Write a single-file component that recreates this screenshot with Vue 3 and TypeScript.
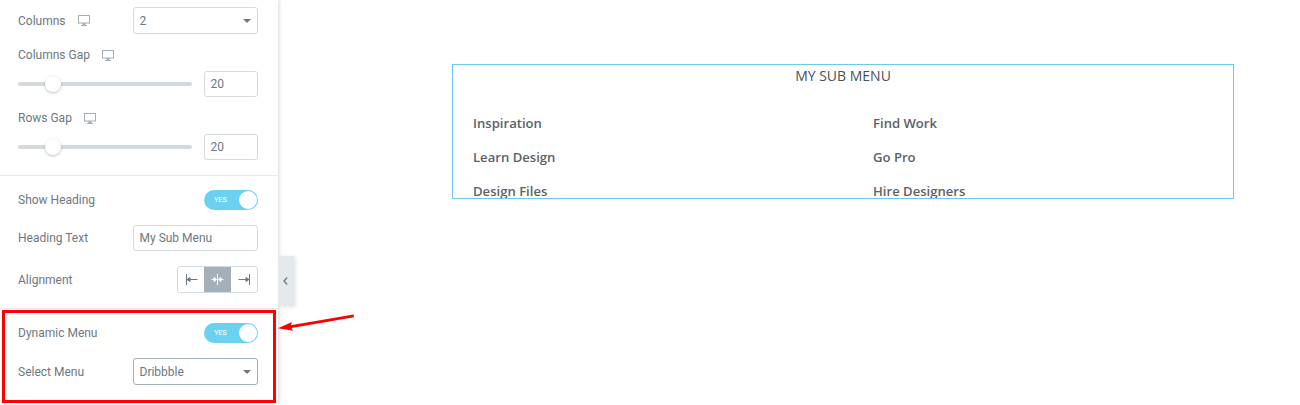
<script setup lang="ts">
const menuItems: string[] = ['Inspiration', 'Find Work', 'Learn Design', 'Go Pro', 'Design Files', 'Hire Designers']
</script>

<template>
  <div class="page">
    <aside class="panel">
      <div class="row first">
        <span class="label">Columns</span>
        <svg class="device" viewBox="0 0 12 11"><path d="M0 0h12v8.5H7.5V10H9v1H3v-1h1.500V8.500H0z M1 1v6.500h10V1z" fill-rule="evenodd" /></svg>
        <div class="select"><span>2</span><i class="caret"></i></div>
      </div>
      <div class="stack gap1">
        <div class="caption"><span class="label">Columns Gap</span>
          <svg class="device" viewBox="0 0 12 11"><path d="M0 0h12v8.5H7.5V10H9v1H3v-1h1.500V8.500H0z M1 1v6.500h10V1z" fill-rule="evenodd" /></svg>
        </div>
        <div class="slider"><div class="track"><i class="thumb"></i></div><div class="num">20</div></div>
      </div>
      <div class="stack gap2">
        <div class="caption"><span class="label">Rows Gap</span>
          <svg class="device" viewBox="0 0 12 11"><path d="M0 0h12v8.5H7.5V10H9v1H3v-1h1.500V8.500H0z M1 1v6.500h10V1z" fill-rule="evenodd" /></svg>
        </div>
        <div class="slider"><div class="track"><i class="thumb"></i></div><div class="num">20</div></div>
      </div>
      <hr class="rule r1" />
      <div class="row toggle-row">
        <span class="label">Show Heading</span>
        <div class="toggle"><span>YES</span><i></i></div>
      </div>
      <div class="row text-row">
        <span class="label">Heading Text</span>
        <div class="text">My Sub Menu</div>
      </div>
      <div class="row align-row">
        <span class="label">Alignment</span>
        <div class="choices">
          <div class="choice">
            <svg viewBox="0 0 13 11"><path d="M1.500 0v11M2 5.500h10.500M2 5.500l3-2v4z" /></svg>
          </div>
          <div class="choice on">
            <svg viewBox="0 0 13 11"><path d="M6.500 0v11M0.500 5.500h4M8.500 5.500h4M5.500 5.500l-2.500-2v4zM7.500 5.500l2.500-2v4z" /></svg>
          </div>
          <div class="choice">
            <svg viewBox="0 0 13 11"><path d="M11.500 0v11M0.500 5.500H11M11 5.500l-3-2v4z" /></svg>
          </div>
        </div>
      </div>
      <hr class="rule r2" />
      <section class="highlight">
        <div class="row dyn">
          <span class="label">Dynamic Menu</span>
          <div class="toggle"><span>YES</span><i></i></div>
        </div>
        <div class="row sel">
          <span class="label">Select Menu</span>
          <div class="select focus"><span>Dribbble</span><i class="caret"></i></div>
        </div>
      </section>
      <div class="collapse">
        <svg viewBox="0 0 5 8"><path d="M4.200 0.500L1 4L4.200 7.500" /></svg>
      </div>
    </aside>

    <main class="canvas">
      <div class="menu">
        <h3>MY SUB MENU</h3>
        <ul>
          <li v-for="item in menuItems" :key="item">{{ item }}</li>
        </ul>
      </div>
    </main>

    <svg class="arrow" viewBox="0 0 80 20" width="80" height="20">
      <path d="M1 14.300L15 8L13.800 11.200L76.500 0.600L77 3.200L14.500 14L16 16.800z" fill="#f00" />
    </svg>
  </div>
</template>

<style scoped>
.page {
  position: relative;
  display: flex;
  width: 1300px;
  height: 405px;
  overflow: hidden;
  background: #fff;
  font-family: Roboto, "Liberation Sans", sans-serif;
}
.panel {
  position: relative;
  flex: none;
  box-sizing: border-box;
  width: 278px;
  height: 405px;
  box-shadow: 1px 0 4px rgba(0, 0, 0, 0.16);
  background: #fff;
  z-index: 1;
}
.row {
  display: flex;
  align-items: center;
  padding: 0 20px 0 18px;
}
.first {
  height: 27px;
  margin-top: 7px;
}
.label {
  font-size: 12px;
  color: #6d7882;
  white-space: nowrap;
}
.device {
  width: 12px;
  height: 11px;
  margin-left: 12px;
  fill: #a4afb7;
}
.select {
  box-sizing: border-box;
  display: flex;
  align-items: center;
  justify-content: space-between;
  width: 125px;
  height: 27px;
  margin-left: auto;
  padding: 0 6px 0 5.500px;
  border: 1px solid #d5dadf;
  border-radius: 3px;
  font-size: 12px;
  color: #6d7882;
}
.select.focus {
  border-color: #a4afb7;
}
.caret {
  width: 0;
  height: 0;
  border-left: 4px solid transparent;
  border-right: 4px solid transparent;
  border-top: 4.500px solid #6d7882;
}
.stack {
  padding: 0 20px 0 18px;
}
.gap1 { margin-top: 14px; }
.gap2 { margin-top: 14px; }
.caption {
  display: flex;
  align-items: center;
  height: 14px;
}
.slider {
  display: flex;
  align-items: center;
  margin-top: 9px;
  height: 26px;
}
.track {
  position: relative;
  width: 174px;
  height: 4px;
  border-radius: 2px;
  background: #d5dadf;
}
.thumb {
  position: absolute;
  left: 27px;
  top: -6.500px;
  width: 16px;
  height: 16px;
  border-radius: 50%;
  background: #fff;
  box-shadow: 0 1px 3px rgba(0, 0, 0, 0.25);
}
.num {
  box-sizing: border-box;
  width: 54px;
  height: 26px;
  margin-left: auto;
  padding-left: 5.500px;
  border: 1px solid #d5dadf;
  border-radius: 3px;
  font-size: 12px;
  line-height: 24px;
  color: #6d7882;
}
.rule {
  margin: 0;
  border: 0;
  height: 1px;
  background: #e6e9ec;
}
.r1 { margin-top: 15px; }
.toggle-row {
  height: 20px;
  margin-top: 14px;
}
.toggle {
  position: relative;
  box-sizing: border-box;
  width: 54px;
  height: 20px;
  margin-left: auto;
  border-radius: 10px;
  background: #6ad2f0;
}
.toggle span {
  position: absolute;
  left: 10px;
  top: 5px;
  font-size: 7.500px;
  line-height: 10px;
  color: #fff;
  letter-spacing: -0.200px;
}
.toggle i {
  position: absolute;
  right: 1px;
  top: 1px;
  width: 18px;
  height: 18px;
  border-radius: 50%;
  background: #fff;
}
.text-row {
  height: 26px;
  margin-top: 15px;
}
.text {
  box-sizing: border-box;
  width: 125px;
  height: 26px;
  margin-left: auto;
  padding-left: 5.500px;
  border: 1px solid #d5dadf;
  border-radius: 3px;
  font-size: 12px;
  line-height: 24px;
  color: #6d7882;
}
.align-row {
  height: 27px;
  margin-top: 15px;
}
.choices {
  display: flex;
  box-sizing: border-box;
  width: 81px;
  height: 27px;
  margin-left: auto;
  border: 1px solid #d5dadf;
  border-radius: 3px;
  overflow: hidden;
}
.choice {
  flex: none;
  width: 26px;
  display: flex;
  align-items: center;
  justify-content: center;
}
.choice svg {
  width: 13px;
  height: 11px;
  fill: #6d7882;
  stroke: #6d7882;
  stroke-width: 1;
}
.choice.on {
  width: 27px;
  background: #a4afb7;
}
.choice.on svg {
  fill: #fff;
  stroke: #fff;
}
.r2 { margin-top: 15px; }
.highlight {
  box-sizing: border-box;
  width: 274px;
  height: 93px;
  margin: 1px 0 0 2px;
  border: 3px solid #f00;
}
.highlight .row {
  padding: 0 15px 0 13px;
}
.dyn {
  height: 20px;
  margin-top: 10px;
}
.sel {
  height: 27px;
  margin-top: 15px;
}
.collapse {
  position: absolute;
  left: 278px;
  top: 256px;
  width: 16px;
  height: 50px;
  display: flex;
  align-items: center;
  justify-content: center;
  padding-right: 2px;
  box-sizing: border-box;
  background: #e6e9ec;
  box-shadow: 2px 1px 4px rgba(0, 0, 0, 0.1);
}
.collapse svg {
  width: 5px;
  height: 8px;
  fill: none;
  stroke: #6d7882;
  stroke-width: 1.300;
}
.canvas {
  flex: 1;
  padding: 64px 0 0 174px;
}
.menu {
  box-sizing: border-box;
  width: 782px;
  height: 135px;
  overflow: hidden;
  border: 1px solid #6ec9ee;
  font-family: "Open Sans", "Noto Sans", sans-serif;
  color: #54595f;
}
.menu h3 {
  margin: 0;
  height: 21px;
  font-size: 14px;
  font-weight: 500;
  line-height: 21px;
  text-align: center;
  color: #4a4f55;
}
.menu ul {
  display: grid;
  grid-template-columns: 400px 1fr;
  grid-auto-rows: 34px;
  margin: 0;
  padding: 20px 0 0 20px;
  list-style: none;
}
.menu li {
  font-size: 13.100px;
  font-weight: 600;
  line-height: 34px;
  color: #5c6167;
}
.arrow {
  position: absolute;
  left: 277px;
  top: 314px;
  z-index: 2;
}
</style>
